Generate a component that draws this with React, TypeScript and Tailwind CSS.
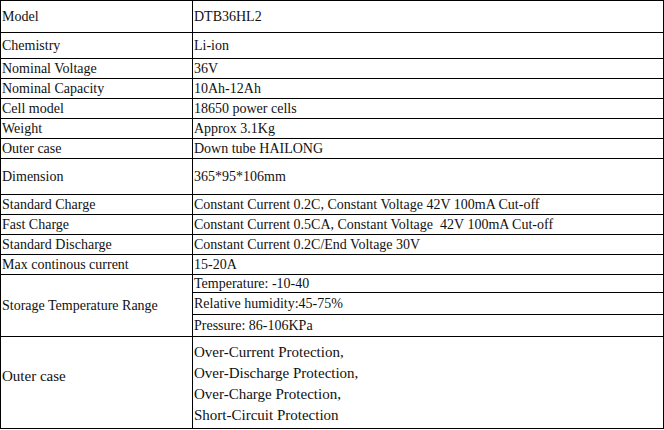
const rows: [string, string, number][] = [
  ['Model', 'DTB36HL2', 32],
  ['Chemistry', 'Li-ion', 26],
  ['Nominal Voltage', '36V', 20],
  ['Nominal Capacity', '10Ah-12Ah', 20],
  ['Cell model', '18650 power cells', 20],
  ['Weight', 'Approx 3.1Kg', 20],
  ['Outer case', 'Down tube HAILONG', 20],
  ['Dimension', '365*95*106mm', 36],
  ['Standard Charge', 'Constant Current 0.2C, Constant Voltage 42V 100mA Cut-off', 20],
  ['Fast Charge', 'Constant Current 0.5CA, Constant Voltage\u00a0 42V 100mA Cut-off', 20],
  ['Standard Discharge', 'Constant Current 0.2C/End Voltage 30V', 20],
  ['Max continous current', '15-20A', 20],
]

const cell = 'border border-black pl-[1px] pr-1 py-0 align-middle whitespace-nowrap leading-none'

export default function App() {
  return (
    <div className="w-[664px] h-[430px] bg-white text-[#111] overflow-hidden" style={{ fontFamily: '"Liberation Serif", "Times New Roman", serif' }}>
      <table className="table-fixed border-collapse w-[663px] text-[14px]">
        <colgroup>
          <col className="w-[192px]" />
          <col className="w-[471px]" />
        </colgroup>
        <tbody>
          {rows.map(([k, v, h]) => (
            <tr key={k + v} style={{ height: h }}>
              <td className={cell}>{k}</td>
              <td className={cell}>{v}</td>
            </tr>
          ))}
          <tr className="h-[18px]">
            <td rowSpan={3} className={cell}>Storage Temperature Range</td>
            <td className={cell}>Temperature: -10-40</td>
          </tr>
          <tr className="h-[22px]">
            <td className={cell}>Relative humidity:45-75%</td>
          </tr>
          <tr className="h-[22px]">
            <td className={cell}>Pressure: 86-106KPa</td>
          </tr>
          <tr className="h-[92px] text-[15px]">
            <td className={cell + ' pb-3'}>Outer case</td>
            <td className="border border-black pl-[1px] pt-[2px] align-middle leading-[21px] whitespace-nowrap">
              <div>Over-Current Protection,</div>
              <div>Over-Discharge Protection,</div>
              <div>Over-Charge Protection,</div>
              <div>Short-Circuit Protection</div>
            </td>
          </tr>
        </tbody>
      </table>
    </div>
  )
}
